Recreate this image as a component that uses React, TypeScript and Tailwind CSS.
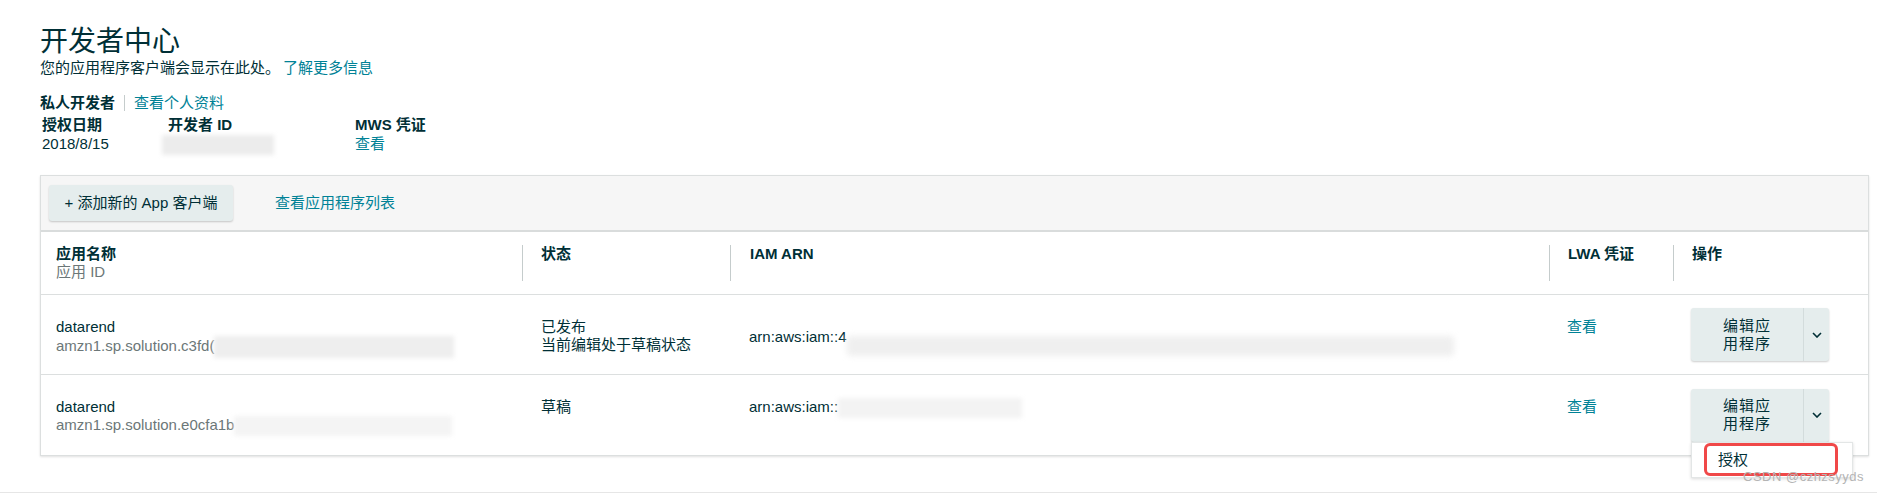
import React from "react";

const font = {
  fontFamily: '"Liberation Sans", "Noto Sans CJK SC", sans-serif',
};

function Chevron() {
  return (
    <svg width="10" height="6" viewBox="0 0 10 6" fill="none">
      <path d="M1 1l4 4 4-4" stroke="#002f36" strokeWidth="1.6" />
    </svg>
  );
}

function ActionButton({ menu }: { menu?: boolean }) {
  return (
    <div className="relative">
      <div className="flex h-[53px] w-[138px] rounded-[3px] bg-[#e5eded] shadow-[0_1px_2px_rgba(0,0,0,0.2)]">
        <div className="flex w-[112px] flex-col items-center justify-center text-[15px] leading-[18px] tracking-[1px] text-[#002f36]">
          <span>编辑应</span>
          <span>用程序</span>
        </div>
        <div className="flex flex-1 items-center justify-center border-l border-[#d3dcdc]">
          <Chevron />
        </div>
      </div>
      {menu && (
        <div className="absolute left-0 top-full z-10 h-[36px] w-[162px] border border-[#e3e6e6] bg-white shadow-[0_1px_3px_rgba(0,0,0,0.15)]">
          <div className="absolute left-[12px] top-0 h-[33px] w-[134px] rounded-[6px] border-[3px] border-[#f04848]" />
          <span className="absolute left-[26px] top-0 text-[15px] leading-[34px] text-[#002f36]">
            授权
          </span>
        </div>
      )}
    </div>
  );
}

function Blur({ w, h, cls }: { w: number; h: number; cls: string }) {
  return (
    <span
      className={`inline-block align-middle blur-[2px] ${cls}`}
      style={{ width: w, height: h }}
    />
  );
}

const cols = "grid grid-cols-[481px_208px_819px_124px_1fr]";

export default function App() {
  return (
    <div className="relative h-[495px] w-full overflow-hidden bg-white text-[#002f36]" style={font}>
      <div className="pl-[40px] pr-[8px] pt-[24px]">
        <h1 className="text-[28px] leading-[35px]">开发者中心</h1>
        <p className="text-[15px] leading-[18px]">
          您的应用程序客户端会显示在此处。
          <a className="ml-[3px] text-[#008296]">了解更多信息</a>
        </p>

        <div className="mt-[17px] flex items-center text-[15px] leading-[18px]">
          <span className="font-bold">私人开发者</span>
          <span className="mx-[9px] h-[16px] w-px bg-[#c5cccc]" />
          <a className="text-[#008296]">查看个人资料</a>
        </div>

        <div className="mt-[4px] grid grid-cols-[126px_187px_200px] pl-[2px] text-[15px] leading-[18px]">
          <span className="font-bold">授权日期</span>
          <span className="font-bold">开发者 ID</span>
          <span className="font-bold">MWS 凭证</span>
          <span className="mt-[1px]">2018/8/15</span>
          <span className="mt-[1px]">
            <Blur w={112} h={20} cls="-ml-[6px] bg-[#ececec]" />
          </span>
          <a className="mt-[1px] text-[#008296]">查看</a>
        </div>

        <div className="mt-[20px] border border-[#dcdfdf] shadow-[0_1px_2px_rgba(0,0,0,0.12)]">
          <div className="flex items-center border-b-2 border-[#d9dcdc] bg-[#f6f6f6] px-[8px] py-[9px]">
            <button className="h-[36px] w-[184px] rounded-[3px] bg-[#e5eded] text-[15px] text-[#002f36] shadow-[0_1px_2px_rgba(0,0,0,0.2)]">
              + 添加新的 App 客户端
            </button>
            <a className="ml-[42px] text-[15px] text-[#008296]">查看应用程序列表</a>
          </div>

          <div className={`${cols} border-b border-[#dcdfdf] py-[13px] text-[15px] leading-[18px]`}>
            <div className="pl-[15px]">
              <div className="font-bold">应用名称</div>
              <div className="text-[#6c7778]">应用 ID</div>
            </div>
            <div className="border-l border-[#c5cccc] pl-[18px] font-bold">状态</div>
            <div className="border-l border-[#c5cccc] pl-[19px] font-bold">IAM ARN</div>
            <div className="border-l border-[#c5cccc] pl-[18px] font-bold">LWA 凭证</div>
            <div className="border-l border-[#c5cccc] pl-[18px] font-bold">操作</div>
          </div>

          <div className={`${cols} h-[80px] border-b border-[#dcdfdf] text-[15px] leading-[18px]`}>
            <div className="pl-[15px] pt-[23px]">
              <div>datarend</div>
              <div className="whitespace-nowrap text-[#6c7778]">
                amzn1.sp.solution.c3fd(
                <Blur w={240} h={22} cls="bg-[#eeeeee]" />
              </div>
            </div>
            <div className="pl-[19px] pt-[23px]">
              <div>已发布</div>
              <div>当前编辑处于草稿状态</div>
            </div>
            <div className="pl-[19px] pt-[23px] whitespace-nowrap">
              arn:aws:iam::4
              <span className="inline-flex h-[40px] w-[607px] items-end align-middle">
                <span className="mb-[2px] h-[20px] w-full rounded-[4px] bg-[#efefef] blur-[3px]" />
              </span>
            </div>
            <div className="pl-[18px] pt-[23px]">
              <a className="text-[#008296]">查看</a>
            </div>
            <div className="flex items-center pl-[18px]">
              <ActionButton />
            </div>
          </div>

          <div className={`${cols} h-[80px] text-[15px] leading-[18px]`}>
            <div className="pl-[15px] pt-[23px]">
              <div>datarend</div>
              <div className="whitespace-nowrap text-[#6c7778]">
                amzn1.sp.solution.e0cfa1b
                <Blur w={218} h={20} cls="bg-[#f4f4f4]" />
              </div>
            </div>
            <div className="pl-[19px] pt-[23px]">
              <div>草稿</div>
            </div>
            <div className="pl-[19px] pt-[23px] whitespace-nowrap">
              arn:aws:iam::
              <Blur w={184} h={20} cls="bg-[#f3f3f3]" />
            </div>
            <div className="pl-[18px] pt-[23px]">
              <a className="text-[#008296]">查看</a>
            </div>
            <div className="flex items-center pl-[18px]">
              <ActionButton menu />
            </div>
          </div>
        </div>
      </div>

      <div className="mt-[36px] h-[4px] border-t border-[#e6e6e6]" />

      <span className="absolute left-[1743px] top-[467px] z-20 text-[13px] tracking-[0.5px] text-[#b4b4b4]">
        CSDN @czhzsyyds
      </span>
    </div>
  );
}
